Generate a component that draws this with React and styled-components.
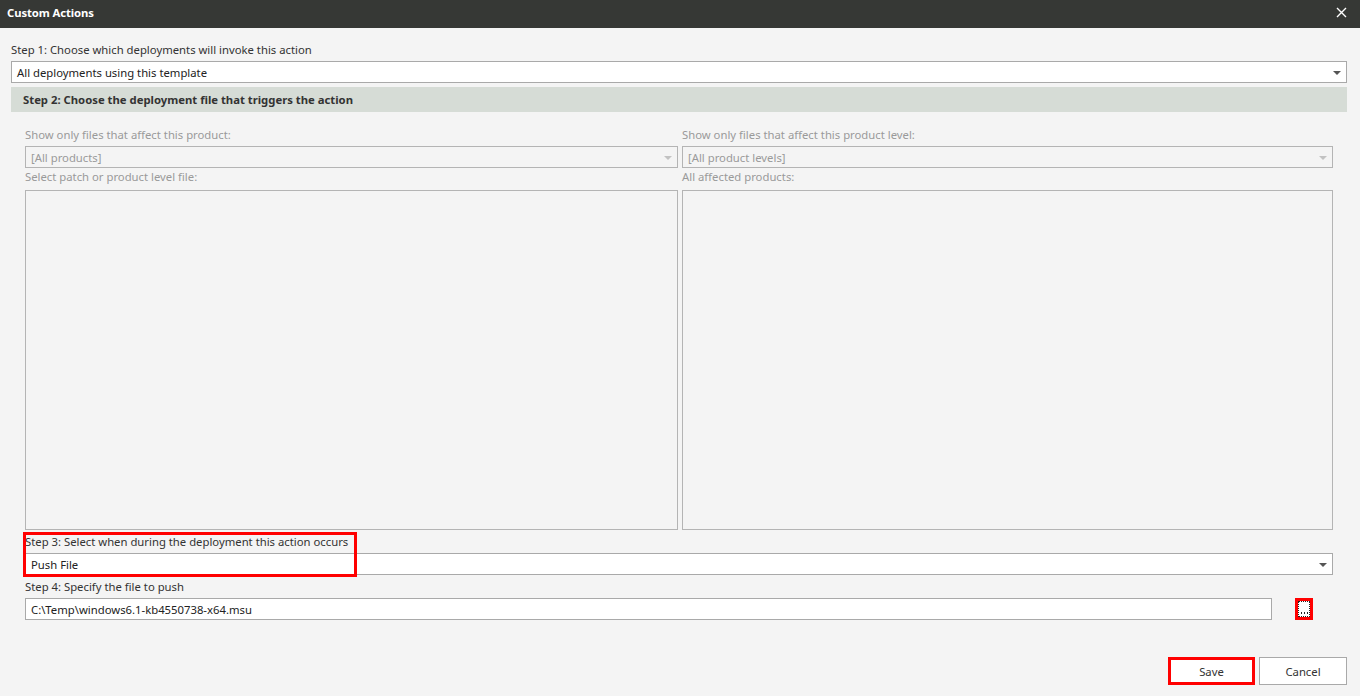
import React from "react";
import styled, { createGlobalStyle } from "styled-components";

const GlobalStyle = createGlobalStyle`
  html, body {
    margin: 0;
    padding: 0;
    background: #f4f4f4;
  }
  body {
    font-family: "Noto Sans", "Open Sans", sans-serif;
    font-size: 11.3px;
    color: #333;
  }
`;

const Window = styled.div`
  width: 1360px;
  height: 696px;
  display: flex;
  flex-direction: column;
  background: #f4f4f4;
  overflow: hidden;
`;

const TitleBar = styled.div`
  height: 28px;
  flex: none;
  box-sizing: border-box;
  background: #363835;
  color: #fff;
  display: flex;
  align-items: center;
  justify-content: space-between;
  padding: 0 12px 3px 7px;
`;

const Title = styled.span`
  font-weight: 700;
  font-size: 11.3px;
  letter-spacing: -0.1px;
`;

const CloseButton = styled.button`
  border: 0;
  background: none;
  padding: 0;
  width: 14px;
  height: 14px;
  display: flex;
  align-items: center;
  justify-content: center;
  cursor: pointer;
`;

const Body = styled.div`
  flex: 1;
  display: flex;
  flex-direction: column;
  padding: 13px 13px 0 11px;
`;

const Label = styled.div`
  height: 20px;
  line-height: 17px;
  color: ${(p) => (p.$disabled ? "#9a9a9a" : "#333")};
  white-space: nowrap;
`;

const SelectBox = styled.div`
  height: 22px;
  box-sizing: border-box;
  border: 1px solid ${(p) => (p.$disabled ? "#b4b4b4" : "#a9a9a9")};
  background: ${(p) => (p.$disabled ? "#f4f4f4" : "#fff")};
  color: ${(p) => (p.$disabled ? "#9a9a9a" : "#222")};
  display: flex;
  align-items: center;
  justify-content: space-between;
  padding: 0 5px 0 5px;
  white-space: nowrap;
`;

const Caret = styled.span`
  width: 0;
  height: 0;
  border-left: 4px solid transparent;
  border-right: 4px solid transparent;
  border-top: 4px solid ${(p) => (p.$disabled ? "#c2c2c2" : "#555")};
  margin-top: 1px;
`;

const SectionHeader = styled.div`
  margin-top: 4px;
  height: 25px;
  background: #d6dcd6;
  font-weight: 700;
  color: #333;
  display: flex;
  align-items: center;
  padding-left: 12px;
`;

const Inner = styled.div`
  display: flex;
  flex-direction: column;
  padding: 14px 14px 0 14px;
`;

const Columns = styled.div`
  display: grid;
  grid-template-columns: 653px 651px;
  column-gap: 4px;
`;

const Column = styled.div`
  display: flex;
  flex-direction: column;
`;

const ListBox = styled.div`
  margin-top: 2px;
  height: 340px;
  box-sizing: border-box;
  border: 1px solid #b4b4b4;
  background: #f4f4f4;
`;

const Spacer = styled.div`
  height: ${(p) => p.$h}px;
`;

const Field = styled.div`
  position: relative;
  display: flex;
  flex-direction: column;
`;

const Highlight = styled.div`
  position: absolute;
  left: -2px;
  top: -1px;
  width: 334px;
  height: 45px;
  box-sizing: border-box;
  border: 3px solid #f00;
  pointer-events: none;
`;

const FileRow = styled.div`
  display: flex;
  align-items: center;
`;

const TextInput = styled.div`
  width: 1247px;
  height: 22px;
  box-sizing: border-box;
  border: 1px solid #a9a9a9;
  background: #fff;
  color: #222;
  display: flex;
  align-items: center;
  padding-left: 5px;
`;

const BrowseButton = styled.button`
  margin-left: 23px;
  width: 18px;
  height: 22px;
  box-sizing: border-box;
  border: 3px solid #f00;
  background: #fff;
  padding: 0;
  position: relative;
  overflow: visible;

  &::before {
    content: "";
    position: absolute;
    inset: 0;
    border: 1px dotted #222;
  }
`;

const Dots = styled.span`
  position: absolute;
  left: 2px;
  bottom: 3px;
  width: 8px;
  height: 2px;
  background-image: radial-gradient(circle, #222 0.8px, transparent 1px);
  background-size: 3px 2px;
`;

const Footer = styled.div`
  margin-top: auto;
  display: flex;
  justify-content: flex-end;
  gap: 4px;
  padding-bottom: 11px;
`;

const Button = styled.button`
  width: ${(p) => (p.$primary ? 87 : 88)}px;
  height: 28px;
  box-sizing: border-box;
  border: ${(p) => (p.$primary ? "3px solid #f00" : "1px solid #a9a9a9")};
  background: #fff;
  font-family: inherit;
  font-size: 11.3px;
  color: #333;
  cursor: pointer;
`;

function Select({ value, disabled }) {
  return (
    <SelectBox $disabled={disabled}>
      <span>{value}</span>
      <Caret $disabled={disabled} />
    </SelectBox>
  );
}

export default function App() {
  return (
    <>
      <GlobalStyle />
      <Window>
        <TitleBar>
          <Title>Custom Actions</Title>
          <CloseButton aria-label="Close">
            <svg width="11" height="11" viewBox="0 0 11 11">
              <path d="M1 1L10 10M10 1L1 10" stroke="#fff" strokeWidth="1.4" />
            </svg>
          </CloseButton>
        </TitleBar>
        <Body>
          <Label>Step 1: Choose which deployments will invoke this action</Label>
          <Select value="All deployments using this template" />
          <SectionHeader>Step 2: Choose the deployment file that triggers the action</SectionHeader>
          <Inner>
            <Columns>
              <Column>
                <Label $disabled>Show only files that affect this product:</Label>
                <Select value="[All products]" disabled />
                <Label $disabled>Select patch or product level file:</Label>
                <ListBox />
              </Column>
              <Column>
                <Label $disabled>Show only files that affect this product level:</Label>
                <Select value="[All product levels]" disabled />
                <Label $disabled>All affected products:</Label>
                <ListBox />
              </Column>
            </Columns>
            <Spacer $h={3} />
            <Field>
              <Label>Step 3: Select when during the deployment this action occurs</Label>
              <Select value="Push File" />
              <Highlight />
            </Field>
            <Spacer $h={3} />
            <Label>Step 4: Specify the file to push</Label>
            <FileRow>
              <TextInput>C:\Temp\windows6.1-kb4550738-x64.msu</TextInput>
              <BrowseButton aria-label="Browse">
                <Dots />
              </BrowseButton>
            </FileRow>
          </Inner>
          <Footer>
            <Button $primary>Save</Button>
            <Button>Cancel</Button>
          </Footer>
        </Body>
      </Window>
    </>
  );
}
